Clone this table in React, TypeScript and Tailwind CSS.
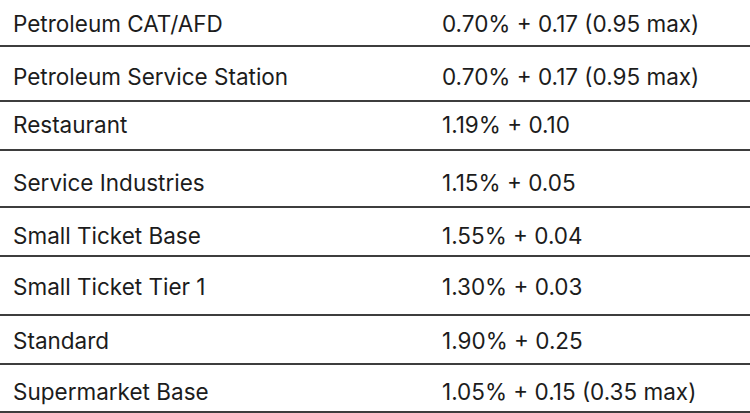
import React from "react";

const rates = [
    { name: "Petroleum CAT/AFD", rate: "0.70% + 0.17 (0.95 max)", row: "h-[47px] pt-[9px]" },
    { name: "Petroleum Service Station", rate: "0.70% + 0.17 (0.95 max)", row: "h-[55px] pt-[15px]" },
    { name: "Restaurant", rate: "1.19% + 0.10", row: "h-[49px] pt-[8px]" },
    { name: "Service Industries", rate: "1.15% + 0.05", row: "h-[57px] pt-[17px]" },
    { name: "Small Ticket Base", rate: "1.55% + 0.04", row: "h-[49px] pt-[13px]" },
    { name: "Small Ticket Tier 1", rate: "1.30% + 0.03", row: "h-[59px] pt-[15px]" },
    { name: "Standard", rate: "1.90% + 0.25", row: "h-[49px] pt-[10px]" },
    { name: "Supermarket Base", rate: "1.05% + 0.15 (0.35 max)", row: "h-[48px] pt-[12px]" },
];

export default function App()
{
    return (
        <div className="w-[750px] h-[413px] overflow-hidden bg-white font-['Inter',sans-serif] text-[22.5px] leading-[30px] text-[#1c1c1c]">
            {rates.map((r) => (
                <RateRow key={r.name} name={r.name} rate={r.rate} row={r.row} />
            ))}
        </div>
    );
}

interface RateRowProps
{
    name: string,
    rate: string,
    row: string
}

const RateRow: React.FC<RateRowProps> = ({ name, rate, row }) =>
{
    return (
        <div className={"flex box-border border-b-2 border-[#3d3d3d] " + row}>
            <div className="w-[414px] pl-[13px] whitespace-nowrap">{name}</div>
            <div className="flex-1 pl-[28px] whitespace-nowrap">{rate}</div>
        </div>
    );
};
